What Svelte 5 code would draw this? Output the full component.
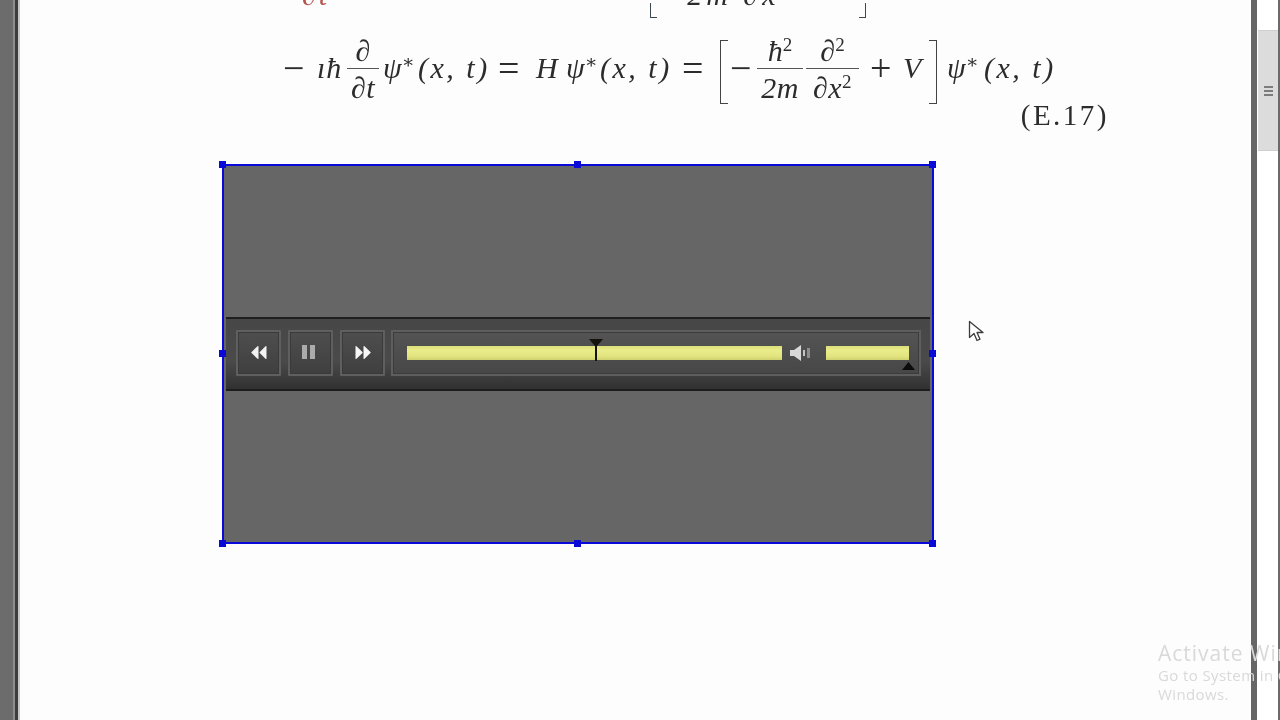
<script>
  const handles = ['tl', 'tc', 'tr', 'ml', 'mr', 'bl', 'bc', 'br'];
</script>

<div class="screen">
  <div class="gutter"><i class="g1"></i><i class="g2"></i><i class="g3"></i><i class="g4"></i></div>

  <main class="page">
    <div class="eq-clip">
      <span class="m red partial">∂t</span>
      <span class="brk-low l"></span>
      <span class="m low-text">2m ∂x<sup>2</sup></span>
      <span class="brk-low r"></span>
    </div>

    <div class="eq">
      <span class="m up minus">−</span>
      <span class="m up ih">ıħ</span>
      <span class="frac f1"><span class="m">∂</span><span class="m">∂t</span></span>
      <span class="m up psi">ψ<sup>∗</sup></span>
      <span class="m up args a1">(x, t)</span>
      <span class="m up eqs e1">=</span>
      <span class="m up big-h">H</span>
      <span class="m up psi p2">ψ<sup>∗</sup></span>
      <span class="m up args a2">(x, t)</span>
      <span class="m up eqs e2">=</span>
      <span class="bracket lb"></span>
      <span class="m up minus2">−</span>
      <span class="frac f2"><span class="m">ħ<sup>2</sup></span><span class="m">2m</span></span>
      <span class="frac f3"><span class="m">∂<sup>2</sup></span><span class="m">∂x<sup>2</sup></span></span>
      <span class="m up plus">+</span>
      <span class="m up vee">V</span>
      <span class="bracket rb"></span>
      <span class="m up psi p3">ψ<sup>∗</sup></span>
      <span class="m up args a3">(x, t)</span>
    </div>

    <div class="tag">(E.17)</div>

    <section class="object">
      {#each handles as h}<b class="handle {h}"></b>{/each}
      <div class="controls">
        <button class="btn" aria-label="Rewind">
          <svg width="16" height="15" viewBox="0 0 16 15"><path d="M7.500 1.500v12q0 1-1 .3L.8 8.300q-1-.8 0-1.600L6.500 1.200q1-.7 1 .3zM15.500 1.500v12q0 1-1 .3L9 8.300q-1-.8 0-1.600l5.500-5.500q1-.7 1 .3z" fill="#f2f2f2"/></svg>
        </button>
        <button class="btn b2" aria-label="Pause">
          <svg class="pause" width="13" height="14" viewBox="0 0 13 14"><path d="M0 0h5v14H0zM8 0h5v14H8z" fill="#ababab"/></svg>
        </button>
        <button class="btn b3" aria-label="Forward">
          <svg width="16" height="15" viewBox="0 0 16 15"><path d="M.5 1.500v12q0 1 1 .3l5.700-5.500q1-.8 0-1.600L1.500 1.200q-1-.7-1 .3zM8.500 1.500v12q0 1 1 .3L15.200 8.300q1-.8 0-1.600L9.500 1.200q-1-.7-1 .3z" fill="#f6f6f6"/></svg>
        </button>
        <div class="track">
          <div class="progress">
            <svg class="head" width="14" height="22" viewBox="0 0 14 22"><path d="M0 0h14L8 7v15H6V7z" fill="#14140c"/></svg>
          </div>
          <svg class="speaker" width="21" height="16" viewBox="0 0 21 16">
            <path d="M0 5h4l7-5v16l-7-5H0z" fill="#d8d8d8"/>
            <path d="M13 5h2v6h-2z" fill="#c4c4c4"/><path d="M17 3h3v10h-3z" fill="#8d8d8d"/>
          </svg>
          <div class="volume">
            <svg class="vol-tri" width="13" height="8" viewBox="0 0 13 8"><path d="M6.500 0L13 8H0z" fill="#0b0b0b"/></svg>
          </div>
        </div>
      </div>
    </section>
  </main>

  <div class="edge"></div>
  <aside class="scroll">
    <div class="thumb"><i></i><i></i><i></i></div>
  </aside>
  <div class="edge2"></div>

  <svg class="cursor" width="18" height="23" viewBox="0 0 18 23">
    <path d="M1.500 1.500v16l4.500-4 3 7 3-1.300-3-6.700h6z" fill="#fff" stroke="#3c3c3c" stroke-width="1.300" stroke-linejoin="round"/>
  </svg>

  <div class="watermark">
    <div class="w1">Activate Windows</div>
    <div class="w2">Go to System in Control Panel to activate</div>
    <div class="w2">Windows.</div>
  </div>
</div>

<style>
  :global(body) { margin: 0; background: #fdfdfd; }
  .screen {
    position: relative;
    display: flex;
    width: 1280px;
    height: 720px;
    overflow: hidden;
    background: #fdfdfd;
  }
  .gutter { display: flex; width: 20px; flex: none; }
  .gutter i { display: block; height: 100%; }
  .g1 { width: 13px; background: #6c6c6c; }
  .g2 { width: 2px; background: #8e8e8e; }
  .g3 { width: 3px; background: #3d3d3d; }
  .g4 { width: 2px; background: #c9c9c9; }

  .page { width: 1231px; flex: none; }
  .m {
    font-family: "Liberation Serif", "DejaVu Serif", serif;
    font-style: italic;
    font-size: 30px;
    line-height: 1;
    color: #2c2c2c;
    white-space: nowrap;
    filter: blur(0.45px);
  }
  .m sup { font-size: 19px; font-style: normal; line-height: 0; vertical-align: 10px; }
  .up { margin-bottom: 3px; }

  .eq-clip { position: relative; display: flex; align-items: flex-end; height: 18px; overflow: hidden; }
  .partial { margin-left: 282px; margin-bottom: 8px; color: #b5544c; letter-spacing: 2px; }
  .brk-low { width: 6px; height: 14px; border-bottom: 1.500px solid #3d4a50; }
  .brk-low.l { margin-left: 321px; border-left: 1.500px solid #3d4a50; }
  .brk-low.r { margin-left: 72px; border-right: 1.500px solid #50404a; }
  .low-text { margin-left: 30px; margin-bottom: 8px; width: 100px; letter-spacing: 4px; }

  .eq { display: flex; align-items: center; height: 63px; margin-top: 20px; }
  .minus, .minus2, .eqs, .plus { font-style: normal; font-size: 38px; }
  .minus { margin-left: 263px; width: 22px; }
  .ih { margin-left: 12px; width: 30px; letter-spacing: 1px; }
  .frac { display: flex; flex-direction: column; align-items: center; }
  .frac .m:first-child { border-bottom: 1.500px solid #555; padding-bottom: 2px; align-self: stretch; text-align: center; }
  .frac .m:last-child { padding-top: 4px; letter-spacing: 0.5px; }
  .f1 { width: 32px; }
  .psi { margin-left: 4px; width: 30px; }
  .args { width: 70px; margin-left: 5px; letter-spacing: 2.500px; }
  .eqs { width: 23px; }
  .e1 { margin-left: 10px; }
  .big-h { margin-left: 15px; width: 26px; }
  .p2 { margin-left: 4px; }
  .a2 { margin-left: 4px; }
  .e2 { margin-left: 12px; }
  .bracket { width: 7px; height: 62px; margin-top: 4px; border: solid #444; border-width: 1.500px 0; }
  .lb { margin-left: 15px; border-left: 1.500px solid #444; }
  .rb { margin-left: 1px; border-right: 1.500px solid #444; }
  .minus2 { margin-left: 2px; width: 26px; }
  .f2 { margin-left: 1px; width: 46px; }
  .f3 { margin-left: 3px; width: 53px; }
  .plus { margin-left: 11px; width: 23px; }
  .vee { margin-left: 10px; width: 25px; }
  .p3 { margin-left: 10px; }
  .a3 { margin-left: 7px; }

  .tag {
    height: 27px;
    margin-top: 1px;
    padding-right: 142px;
    text-align: right;
    font-family: "Liberation Serif", serif;
    font-size: 29px;
    line-height: 27px;
    letter-spacing: 2.500px;
    color: #2c2c2c;
    filter: blur(0.45px);
  }

  .object {
    position: relative;
    display: flex;
    align-items: center;
    box-sizing: border-box;
    width: 712px;
    height: 380px;
    margin: 35px 0 0 202px;
    border: 2px solid #0a0ad8;
    background: #666;
  }
  .handle { position: absolute; width: 7px; height: 7px; background: #0a0ad8; }
  .tl, .tc, .tr { top: -5px; }
  .bl, .bc, .br { bottom: -5px; }
  .ml, .mr { top: 184px; }
  .tl, .ml, .bl { left: -5px; }
  .tr, .mr, .br { right: -4px; }
  .tc, .bc { left: 350px; }

  .controls {
    display: flex;
    align-items: center;
    box-sizing: border-box;
    width: 704px;
    height: 74px;
    margin-left: 2px;
    padding: 0 8px 3px 10px;
    border-top: 2px solid #1f1f1f;
    border-bottom: 2px solid #1d1d1d;
    background: linear-gradient(#474747 0, #4a4a4a 60%, #313131 100%);
  }
  .btn {
    display: flex;
    align-items: center;
    justify-content: center;
    box-sizing: border-box;
    width: 45px;
    height: 46px;
    padding: 0 0 1px;
    border: 2px solid #5f5f5f;
    border-radius: 1px;
    background: linear-gradient(#4e4e4e, #3f3f3f);
    box-shadow: inset 0 0 0 1px #3a3a3a;
  }
  .pause { margin: -1px 5px 0 0; }
  .b2 { margin-left: 7px; }
  .b3 { margin-left: 7px; }
  .track {
    position: relative;
    display: flex;
    align-items: center;
    box-sizing: border-box;
    width: 530px;
    height: 46px;
    margin-left: 6px;
    padding: 0 0 0 14px;
    border: 2px solid #5e5e5e;
    background: linear-gradient(#545454, #474747);
    box-shadow: inset 0 0 0 1px #3c3c3c;
  }
  .progress, .volume {
    position: relative;
    height: 14px;
    background: linear-gradient(#dcde78, #ebed8c 30%, #e1e37e 75%, #cfd16e);
  }
  .progress { width: 375px; }
  .head { position: absolute; left: 182px; top: -7px; }
  .speaker { margin-left: 8px; flex: none; }
  .volume { width: 83px; margin-left: 15px; }
  .vol-tri { position: absolute; right: -6px; top: 16px; }

  .edge { width: 6px; flex: none; background: #666; }
  .scroll { width: 21px; flex: none; background: #fff; }
  .edge2 { width: 2px; flex: none; background: #6a6a6a; }
  .thumb {
    display: flex;
    flex-direction: column;
    gap: 2px;
    align-items: center;
    justify-content: center;
    box-sizing: border-box;
    height: 121px;
    margin: 30px 0 0 1px;
    background: #dcdcdc;
    border: solid #cfcfcf;
    border-width: 1px 0;
  }
  .thumb i { display: block; width: 9px; height: 2px; background: #7c7c7c; }

  .cursor { position: absolute; left: 968px; top: 320px; }

  .watermark {
    position: absolute;
    left: 1158px;
    top: 640px;
    width: 122px;
    overflow: hidden;
    white-space: nowrap;
    font-family: "Open Sans", sans-serif;
    color: #d9d9d9;
    filter: blur(0.4px);
  }
  .w1 { font-size: 21px; line-height: 26px; letter-spacing: 1px; }
  .w2 { font-size: 15px; line-height: 19px; letter-spacing: 0.4px; }
</style>
